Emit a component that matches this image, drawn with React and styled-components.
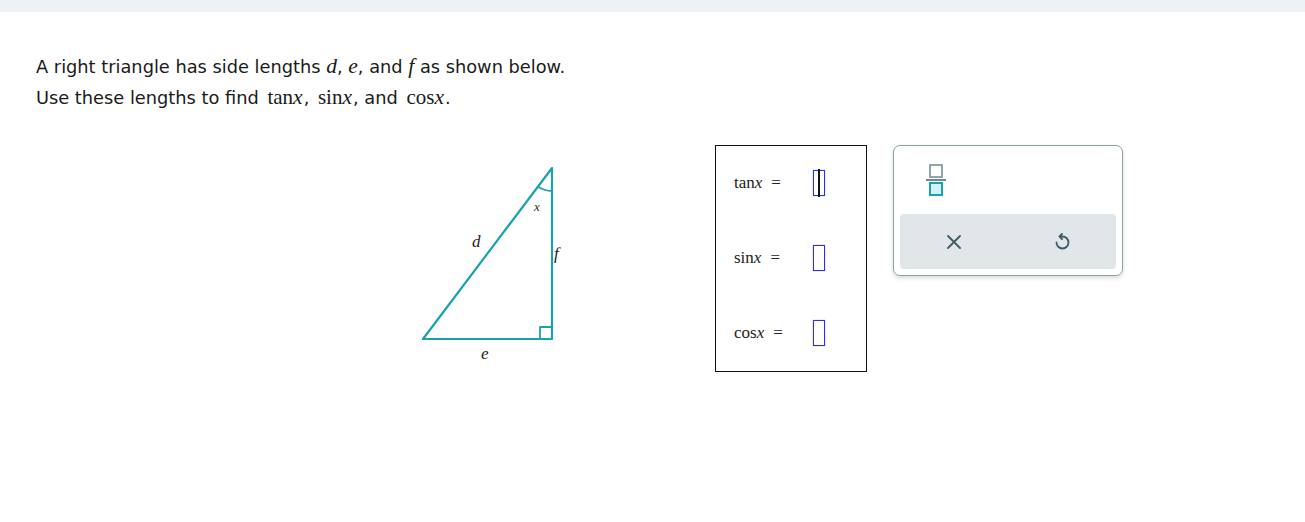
import styled, { createGlobalStyle } from "styled-components";

const GlobalStyle = createGlobalStyle`
  html, body {
    margin: 0;
    padding: 0;
    background: #ffffff;
  }
  body {
    font-family: "DejaVu Sans", "Liberation Sans", sans-serif;
    color: #1a1a1a;
  }
`;

function MathVar({ children }) {
  return <Var>{children}</Var>;
}

function Fn({ name }) {
  return (
    <FnText>
      {name}
      <Var>x</Var>
    </FnText>
  );
}

function AnswerRow({ name, active }) {
  return (
    <Row>
      <RowLabel>
        {name}
        <LabelVar>x</LabelVar>
        <Eq>=</Eq>
      </RowLabel>
      <Slot>{active && <Caret />}</Slot>
    </Row>
  );
}

function Triangle() {
  return (
    <svg width="160" height="220" viewBox="0 0 160 220">
      <g stroke="#1aa0b2" strokeWidth="2.2" fill="none" strokeLinejoin="round">
        <polygon points="13,189 142,189 142,18" />
        <polyline points="130,189 130,177 142,177" strokeWidth="1.8" />
        <path d="M128.5,37 Q135,41 142,41" strokeWidth="1.8" />
      </g>
      <g fontFamily="'Liberation Serif', serif" fontStyle="italic" fontSize="17" fill="#222">
        <text x="62" y="97">d</text>
        <text x="71" y="209">e</text>
        <text x="144" y="109">f</text>
        <text x="124" y="61" fontSize="13" fill="#3a2a1a">x</text>
      </g>
    </svg>
  );
}

function FractionIcon() {
  return (
    <svg width="24" height="34" viewBox="0 0 24 34">
      <rect x="6" y="2" width="12" height="12" fill="#fff" stroke="#8fa4ac" strokeWidth="2" />
      <line x1="2" y1="17" x2="22" y2="17" stroke="#6f8a94" strokeWidth="2" />
      <rect x="6" y="20" width="12" height="12" fill="#d4f1f5" stroke="#1aa0b2" strokeWidth="2" />
    </svg>
  );
}

function CloseIcon() {
  return (
    <svg width="16" height="16" viewBox="0 0 16 16">
      <path d="M2 2 L14 14 M14 2 L2 14" stroke="#3d5a66" strokeWidth="1.8" strokeLinecap="round" />
    </svg>
  );
}

function UndoIcon() {
  return (
    <svg width="18" height="18" viewBox="0 0 18 18">
      <path
        d="M7 3.5 H9.5 A6 6 0 1 1 3.5 9.5"
        stroke="#3d5a66"
        strokeWidth="1.8"
        fill="none"
        strokeLinecap="round"
      />
      <path d="M9 1 L6.5 3.5 L9 6" stroke="#3d5a66" strokeWidth="1.8" fill="none" strokeLinecap="round" strokeLinejoin="round" />
    </svg>
  );
}

export default function App() {
  return (
    <>
      <GlobalStyle />
      <TopBar />
      <Page>
        <Prompt>
          <Line>
            A right triangle has side lengths <MathVar>d</MathVar>, <MathVar>e</MathVar>, and{" "}
            <MathVar>f</MathVar> as shown below.
          </Line>
          <Line>
            Use these lengths to find <Fn name="tan" />, <Fn name="sin" />, and <Fn name="cos" />.
          </Line>
        </Prompt>
        <Work>
          <Figure>
            <Triangle />
          </Figure>
          <AnswerBox>
            <AnswerRow name="tan" active />
            <AnswerRow name="sin" />
            <AnswerRow name="cos" />
          </AnswerBox>
          <Keypad>
            <KeyTop>
              <KeyButton>
                <FractionIcon />
              </KeyButton>
            </KeyTop>
            <ActionBar>
              <ActionButton>
                <CloseIcon />
              </ActionButton>
              <ActionButton>
                <UndoIcon />
              </ActionButton>
            </ActionBar>
          </Keypad>
        </Work>
      </Page>
    </>
  );
}

const TopBar = styled.div`
  height: 12px;
  background: #eff2f4;
`;

const Page = styled.main`
  padding: 39px 36px 0;
`;

const Prompt = styled.div`
  font-size: 17.8px;
  line-height: 30px;
  color: #1a1a1a;
`;

const Line = styled.div`
  white-space: nowrap;
`;

const Var = styled.span`
  font-family: "Liberation Serif", "Times New Roman", serif;
  font-style: italic;
  font-size: 21.5px;
`;

const FnText = styled.span`
  font-family: "Liberation Serif", "Times New Roman", serif;
  font-size: 21px;
  margin: 0 1px 0 3px;
`;

const Work = styled.div`
  display: flex;
  align-items: flex-start;
  margin-top: 37px;
`;

const Figure = styled.div`
  width: 160px;
  margin-left: 374px;
`;

const AnswerBox = styled.div`
  width: 152px;
  height: 227px;
  border: 1px solid #111;
  margin-left: 145px;
  margin-top: -5px;
  box-sizing: border-box;
  padding-top: 24px;
  display: flex;
  flex-direction: column;
  gap: 49px;
`;

const Row = styled.div`
  display: flex;
  align-items: center;
  padding-left: 18px;
  height: 26px;
`;

const RowLabel = styled.div`
  font-family: "Liberation Serif", "Times New Roman", serif;
  font-size: 17px;
  color: #222;
  width: 79px;
  white-space: nowrap;
`;

const LabelVar = styled.span`
  font-style: italic;
`;

const Eq = styled.span`
  margin-left: 9px;
`;

const Slot = styled.div`
  position: relative;
  width: 10px;
  height: 24px;
  border: 1.5px solid #2b2bff;
  box-shadow: 0 0 1px #8f8fff;
`;

const Caret = styled.div`
  position: absolute;
  left: 4px;
  top: -2px;
  bottom: -2px;
  width: 1.5px;
  background: #111;
`;

const Keypad = styled.div`
  margin-left: 26px;
  margin-top: -5px;
  width: 230px;
  height: 131px;
  border: 1px solid #8da0a8;
  border-radius: 7px;
  box-shadow: 0 2px 4px rgba(0, 0, 0, 0.15);
  box-sizing: border-box;
  padding: 6px;
  display: flex;
  flex-direction: column;
`;

const KeyTop = styled.div`
  height: 62px;
  display: flex;
  align-items: flex-start;
  padding: 11px 0 0 24px;
  box-sizing: border-box;
`;

const KeyButton = styled.div`
  display: flex;
  align-items: center;
  justify-content: center;
`;

const ActionBar = styled.div`
  flex: 1;
  background: #e1e7e9;
  border-radius: 4px;
  display: grid;
  grid-template-columns: 1fr 1fr;
  align-items: center;
  justify-items: center;
`;

const ActionButton = styled.div`
  display: flex;
  align-items: center;
  justify-content: center;
`;
